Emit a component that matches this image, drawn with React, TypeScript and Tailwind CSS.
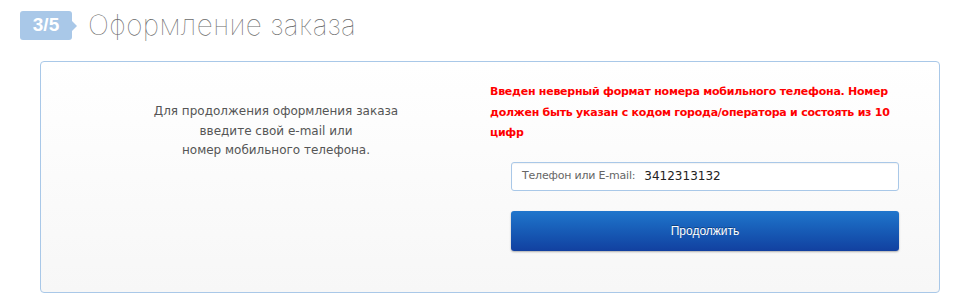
export default function App() {
  return (
    <div className="w-[960px] h-[300px] bg-white font-['DejaVu_Sans',sans-serif] overflow-hidden">
      {/* Заголовок шага */}
      <div className="flex items-center h-[52px] pl-5">
        <div className="relative flex items-center justify-center w-[52px] h-[29px] -mt-[1px] rounded-[3px] bg-[#a9c8e8] text-white font-bold text-[19px] font-['Liberation_Sans',sans-serif]">
          3/5
          <span className="absolute -right-[5px] top-[10px] w-0 h-0 border-y-[5px] border-y-transparent border-l-[5px] border-l-[#a9c8e8]" />
        </div>
        <h1 className="ml-[16px] -mt-[2px] text-[28px] leading-none font-thin tracking-[0.4px] text-[#6b6b6b] font-['Inter',sans-serif]">
          Оформление заказа
        </h1>
      </div>

      {/* Панель */}
      <div className="ml-10 w-[900px] mt-[9px] h-[232px] rounded-[4px] border border-[#a9c8e8] bg-gradient-to-b from-white to-[#f7f7f7] flex">
        <div className="w-[470px] pt-[40px] text-center text-[12px] leading-[19.5px] text-[#555]">
          Для продолжения оформления заказа
          <br />
          введите свой e-mail или
          <br />
          номер мобильного телефона.
        </div>

        <div className="flex-1 pt-[20px] pr-10">
          <p className="-ml-[21px] -mr-[4px] text-[11px] tracking-[-0.25px] leading-[20.5px] font-bold text-[#ff0000]">
            Введен неверный формат номера мобильного телефона. Номер должен быть указан с кодом города/оператора и состоять из 10 цифр
          </p>

          <div className="mt-[18px] flex items-center h-[29px] rounded-[3px] border border-[#a9c8e8] bg-white px-[10px] shadow-[inset_0_1px_1px_rgba(0,0,0,0.05)]">
            <span className="text-[11px] tracking-[-0.2px] text-[#666]">Телефон или E-mail:</span>
            <span className="ml-[9px] text-[12px] text-[#222]">3412313132</span>
          </div>

          <button className="mt-5 w-full h-10 rounded-[3px] bg-gradient-to-b from-[#2076cc] to-[#1240a0] text-white text-[12px] font-['Liberation_Sans',sans-serif] [text-shadow:0_-1px_0_rgba(0,0,0,0.35)] shadow-[0_1px_2px_rgba(0,0,0,0.3)]">
            Продолжить
          </button>
        </div>
      </div>
    </div>
  );
}
